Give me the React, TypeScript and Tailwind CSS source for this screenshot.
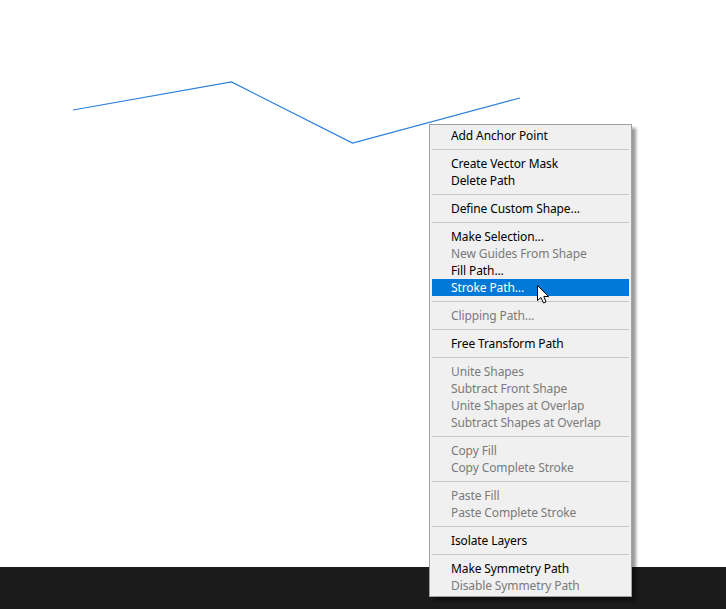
import React from 'react';

type Item = { label: string; disabled?: boolean; active?: boolean };

const groups: Item[][] = [
  [{ label: 'Add Anchor Point' }],
  [{ label: 'Create Vector Mask' }, { label: 'Delete Path' }],
  [{ label: 'Define Custom Shape...' }],
  [
    { label: 'Make Selection...' },
    { label: 'New Guides From Shape', disabled: true },
    { label: 'Fill Path...' },
    { label: 'Stroke Path...', active: true },
  ],
  [{ label: 'Clipping Path...', disabled: true }],
  [{ label: 'Free Transform Path' }],
  [
    { label: 'Unite Shapes', disabled: true },
    { label: 'Subtract Front Shape', disabled: true },
    { label: 'Unite Shapes at Overlap', disabled: true },
    { label: 'Subtract Shapes at Overlap', disabled: true },
  ],
  [
    { label: 'Copy Fill', disabled: true },
    { label: 'Copy Complete Stroke', disabled: true },
  ],
  [
    { label: 'Paste Fill', disabled: true },
    { label: 'Paste Complete Stroke', disabled: true },
  ],
  [{ label: 'Isolate Layers' }],
  [{ label: 'Make Symmetry Path' }, { label: 'Disable Symmetry Path', disabled: true }],
];

const MenuRow = ({ item }: { item: Item }) => {
  let color = 'text-[#000000]';
  if (item.disabled) color = 'text-[#7a7a7a]';
  if (item.active) color = 'bg-[#0078d7] text-[#ffffff]';
  return <div className={`h-[17px] pl-[19px] leading-[17px] whitespace-nowrap ${color}`}>{item.label}</div>;
};

const App = () => {
  return (
    <div className="relative flex h-[609px] w-[726px] flex-col overflow-hidden bg-white font-['Noto_Sans',sans-serif]">
      {/* Canvas */}
      <main className="flex-1">
        <svg width="726" height="567" className="block">
          <polyline points="73,110 231.5,82 352.5,143 520,98" fill="none" stroke="#2a7fdc" strokeWidth="1.25" />
        </svg>
      </main>

      {/* Bottom bar */}
      <footer className="h-[42px] bg-[#1b1b1b]" />

      {/* Context menu */}
      <div className="absolute left-[429px] top-[124px] w-[203px] border border-[#a0a0a0] bg-[#f0f0f0] px-[2px] py-[2px] text-[12px] tracking-[-0.11px] shadow-[4px_4px_3px_rgba(0,0,0,0.4)]">
        {groups.map((group, i) => (
          <div key={i}>
            {i > 0 && <div className="my-[5px] h-px bg-[#c8c8c8]" />}
            {group.map((item) => (
              <MenuRow key={item.label} item={item} />
            ))}
          </div>
        ))}
      </div>

      {/* Pointer */}
      <svg width="14" height="20" viewBox="0 0 14 20" className="absolute left-[537px] top-[285px]">
        <path d="M0.5 0.5V15.5L4 12.5L6.5 18L9 17L6.8 11.5H11.5Z" fill="#ffffff" stroke="#000000" strokeWidth="1" />
      </svg>
    </div>
  );
};

export default App;
